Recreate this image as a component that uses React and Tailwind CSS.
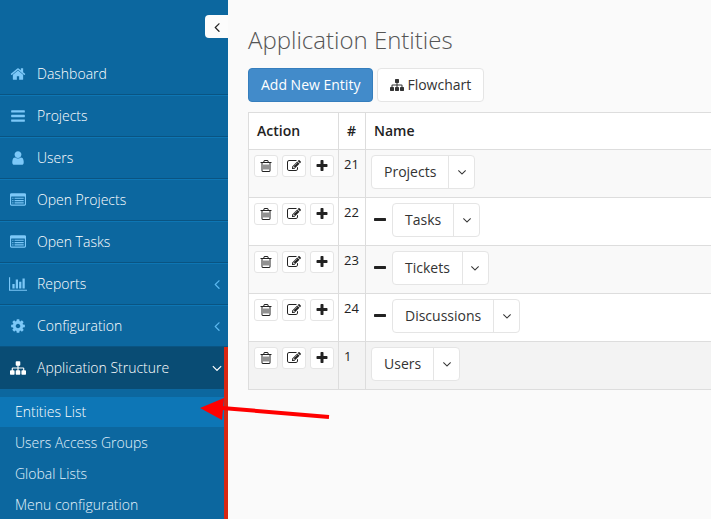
const ICONS = {
  home: "M1472 992v480q0 26-19 45t-45 19h-384v-384h-256v384h-384q-26 0-45-19t-19-45v-480q0-1 .5-3t.5-3l575-474 575 474q1 2 1 6zm223-69l-62 74q-8 9-21 11h-3q-13 0-21-7l-692-577-692 577q-12 8-24 7-13-2-21-11l-62-74q-8-10-7-23.5t11-21.5l719-599q32-26 76-26t76 26l244 204v-195q0-14 9-23t23-9h192q14 0 23 9t9 23v408l219 182q10 8 11 21.5t-7 23.5z",
  bars: "M1664 1344v128q0 26-19 45t-45 19h-1408q-26 0-45-19t-19-45v-128q0-26 19-45t45-19h1408q26 0 45 19t19 45zm0-512v128q0 26-19 45t-45 19h-1408q-26 0-45-19t-19-45v-128q0-26 19-45t45-19h1408q26 0 45 19t19 45zm0-512v128q0 26-19 45t-45 19h-1408q-26 0-45-19t-19-45v-128q0-26 19-45t45-19h1408q26 0 45 19t19 45z",
  user: "M1536 1399q0 109-62.5 187t-150.5 78h-854q-88 0-150.5-78t-62.5-187q0-85 8.5-160.5t31.5-152 58.5-131 94-89 134.5-34.5q131 128 313 128t313-128q76 0 134.5 34.5t94 89 58.5 131 31.5 152 8.5 160.5zm-256-887q0 159-112.5 271.5t-271.5 112.5-271.5-112.5-112.5-271.5 112.5-271.5 271.5-112.5 271.5 112.5 112.5 271.5z",
  list: "M256 1152h128v128h-128zM256 896h128v128h-128zM256 640h128v128h-128zM512 1152h1024v128h-1024zM512 896h1024v128h-1024zM512 640h1024v128h-1024zM1664 1376v-832q0-13-9.5-22.5t-22.5-9.5h-1472q-13 0-22.5 9.5t-9.5 22.5v832q0 13 9.5 22.5t22.5 9.5h1472q13 0 22.5-9.5t9.5-22.5zm128-1088v1088q0 66-47 113t-113 47h-1472q-66 0-113-47t-47-113v-1088q0-66 47-113t113-47h1472q66 0 113 47t47 113z",
  chart: "M640 896v512h-256v-512h256zm384-512v1024h-256v-1024h256zm1024 1152v128h-2048v-1536h128v1408h1920zm-640-896v768h-256v-768h256zm384-384v1152h-256v-1152h256z",
  cog: "M1152 896q0-106-75-181t-181-75-181 75-75 181 75 181 181 75 181-75 75-181zm512-109v222q0 12-8 23t-20 13l-185 28q-19 54-39 91 35 50 107 138 10 12 10 25t-9 23q-27 37-99 108t-94 71q-12 0-26-9l-138-108q-44 23-91 38-16 136-29 186-7 28-36 28h-222q-14 0-24.5-8.5t-11.5-21.5l-28-184q-49-16-90-37l-141 107q-10 9-25 9-14 0-25-11-126-114-165-168-7-10-7-23 0-12 8-23 15-21 51-66.5t54-70.5q-27-50-41-99l-183-27q-13-2-21-12.5t-8-23.5v-222q0-12 8-23t19-13l186-28q14-46 39-92-40-57-107-138-10-12-10-24 0-10 9-23 26-36 98.5-107.5t94.5-71.5q13 0 26 10l138 107q44-23 91-38 16-136 29-186 7-28 36-28h222q14 0 24.5 8.5t11.5 21.5l28 184q49 16 90 37l142-107q9-9 24-9 13 0 25 10 129 119 165 170 7 8 7 22 0 12-8 23-15 21-51 66.5t-54 70.5q26 50 41 98l183 28q13 2 21 12.5t8 23.5z",
  sitemap: "M1792 1248v320q0 40-28 68t-68 28h-320q-40 0-68-28t-28-68v-320q0-40 28-68t68-28h96v-192h-512v192h96q40 0 68 28t28 68v320q0 40-28 68t-68 28h-320q-40 0-68-28t-28-68v-320q0-40 28-68t68-28h96v-192h-512v192h96q40 0 68 28t28 68v320q0 40-28 68t-68 28h-320q-40 0-68-28t-28-68v-320q0-40 28-68t68-28h96v-192q0-52 38-90t90-38h512v-192h-96q-40 0-68-28t-28-68v-320q0-40 28-68t68-28h320q40 0 68 28t28 68v320q0 40-28 68t-68 28h-96v192h512q52 0 90 38t38 90v192h96q40 0 68 28t28 68z",
  trash: "M704 736v576q0 14-9 23t-23 9h-64q-14 0-23-9t-9-23v-576q0-14 9-23t23-9h64q14 0 23 9t9 23zm256 0v576q0 14-9 23t-23 9h-64q-14 0-23-9t-9-23v-576q0-14 9-23t23-9h64q14 0 23 9t9 23zm256 0v576q0 14-9 23t-23 9h-64q-14 0-23-9t-9-23v-576q0-14 9-23t23-9h64q14 0 23 9t9 23zm128 724v-948h-896v948q0 22 7 40.5t14.5 27 10.5 8.5h832q3 0 10.5-8.5t14.5-27 7-40.5zm-672-1076h448l-48-117q-7-9-17-11h-317q-10 2-17 11zm928 32v64q0 14-9 23t-23 9h-96v948q0 83-47 143.5t-113 60.5h-832q-66 0-113-58.5t-47-141.5v-952h-96q-14 0-23-9t-9-23v-64q0-14 9-23t23-9h309l70-167q15-37 54-63t79-26h320q40 0 79 26t54 63l70 167h309q14 0 23 9t9 23z",
  edit: "M888 1184l116-116-152-152-116 116v56h96v96h56zm440-720q-16-16-33 1l-350 350q-17 17-1 33t33-1l350-350q17-17 1-33zm80 594v190q0 119-84.5 203.5t-203.5 84.5h-832q-119 0-203.5-84.5t-84.5-203.5v-832q0-119 84.5-203.5t203.5-84.5h832q63 0 117 25 15 7 18 23 3 17-9 29l-49 49q-14 14-32 8-23-6-45-6h-832q-66 0-113 47t-47 113v832q0 66 47 113t113 47h832q66 0 113-47t47-113v-126q0-13 9-22l64-64q15-15 35-7t20 29zm-96-738l288 288-672 672h-288v-288zm444 132l-92 92-288-288 92-92q28-28 68-28t68 28l152 152q28 28 28 68t-28 68z",
  plus: "M1600 736v192q0 40-28 68t-68 28h-416v416q0 40-28 68t-68 28h-192q-40 0-68-28t-28-68v-416h-416q-40 0-68-28t-28-68v-192q0-40 28-68t68-28h416v-416q0-40 28-68t68-28h192q40 0 68 28t28 68v416h416q40 0 68 28t28 68z",
  minus: "M1664 736v192q0 40-28 68t-68 28h-1344q-40 0-68-28t-28-68v-192q0-40 28-68t68-28h1344q40 0 68 28t28 68z",
  angleLeft: "M1203 544q0 13-10 23l-393 393 393 393q10 10 10 23t-10 23l-50 50q-10 10-23 10t-23-10l-466-466q-10-10-10-23t10-23l466-466q10-10 23-10t23 10l50 50q10 10 10 23z",
  angleDown: "M1395 736q0 13-10 23l-466 466q-10 10-23 10t-23-10l-466-466q-10-10-10-23t10-23l50-50q10-10 23-10t23 10l393 393 393-393q10-10 23-10t23 10l50 50q10 10 10 23z",
};

const menu = [
  { label: "Dashboard", icon: "home" },
  { label: "Projects", icon: "bars" },
  { label: "Users", icon: "user" },
  { label: "Open Projects", icon: "list" },
  { label: "Open Tasks", icon: "list" },
  { label: "Reports", icon: "chart", arrow: "angleLeft" },
  { label: "Configuration", icon: "cog", arrow: "angleLeft" },
];

const submenu = ["Entities List", "Users Access Groups", "Global Lists", "Menu configuration"];

const entities = [
  { id: 21, name: "Projects", row: "bg-[#f9f9f9]" },
  { id: 22, name: "Tasks", nested: true, row: "bg-white" },
  { id: 23, name: "Tickets", nested: true, row: "bg-[#f9f9f9]" },
  { id: 24, name: "Discussions", nested: true, row: "bg-white" },
  { id: 1, name: "Users", row: "bg-[#f3f3f3]" },
];

function Icon({ name, className = "size-[14px]" }) {
  return (
    <svg
      className={`shrink-0 ${className}`}
      viewBox={name === "chart" ? "0 0 2048 1792" : "0 0 1792 1792"}
      fill="currentColor"
      aria-hidden="true"
    >
      <path d={ICONS[name]} />
    </svg>
  );
}

function Sidebar() {
  return (
    <aside className="relative flex w-[228px] shrink-0 flex-col bg-[#0c679f] text-white">
      <div className="flex h-[53px] shrink-0 items-center justify-end">
        <button
          type="button"
          aria-label="Collapse menu"
          className="flex h-[23px] w-[23px] items-center justify-center rounded-l bg-[#fcfcfc] text-[#222]"
        >
          <Icon name="angleLeft" className="size-4" />
        </button>
      </div>

      <nav className="text-sm font-light">
        {menu.map((item) => (
          <a
            key={item.label}
            href="#"
            className="flex h-[42px] items-center gap-[9px] border-t border-b border-t-[#0e76b4] border-b-[#0a5482] pr-[3px] pl-2 first:border-t-transparent"
          >
            <span className="flex w-5 justify-center text-[#7cc8f8]">
              <Icon name={item.icon} className={item.icon === "chart" ? "h-4 w-[18px]" : "size-4"} />
            </span>
            <span className="flex-1">{item.label}</span>
            {item.arrow && <Icon name={item.arrow} className="size-4 text-[#5cb8f0]" />}
          </a>
        ))}
        <a href="#" aria-expanded="true" className="flex h-[42px] items-center gap-[9px] bg-[#094c74] pr-[3px] pl-2">
          <span className="flex w-5 justify-center">
            <Icon name="sitemap" className="size-4" />
          </span>
          <span className="flex-1">Application Structure</span>
          <Icon name="angleDown" className="size-4" />
        </a>
        <ul className="flex flex-col gap-px py-2">
          {submenu.map((label, i) => (
            <li key={label}>
              <a
                href="#"
                className={`flex h-[30px] items-center pl-[15px] ${i === 0 ? "bg-[#0d76b6] text-white" : "text-[#e4f3fc]"}`}
              >
                {label}
              </a>
            </li>
          ))}
        </ul>
      </nav>
      <span className="absolute top-[347px] right-0 bottom-0 w-1 bg-[#d92612]" />
      <svg className="absolute top-[396px] left-[200px] z-10 h-7 w-[132px]" viewBox="0 0 132 28" aria-hidden="true">
        <path d="M22 12L129 21" stroke="#ff0000" strokeWidth="4" />
        <path d="M0 12L24 2L22 24Z" fill="#ff0000" />
      </svg>
    </aside>
  );
}

function ActionButton({ icon, label }) {
  return (
    <button
      type="button"
      aria-label={label}
      className="flex h-[22px] items-center justify-center rounded-[3px] border border-[#e5e5e5] bg-white px-1 text-[#222]"
    >
      <Icon name={icon} />
    </button>
  );
}

function EntityButton({ name }) {
  return (
    <div className="flex h-[34px] rounded border border-[#e5e5e5] bg-white text-[#333]">
      <button type="button" className="px-3">
        {name}
      </button>
      <button
        type="button"
        aria-label={`${name} options`}
        className="flex w-[26px] items-center justify-center border-l border-[#e5e5e5]"
      >
        <Icon name="angleDown" />
      </button>
    </div>
  );
}

export default function App() {
  return (
    <div className="flex h-screen overflow-hidden bg-[#fafafa] font-['Open_Sans',sans-serif] text-sm text-[#222]">
      <Sidebar />
      <main className="min-w-0 flex-1 pt-5 pl-5">
        <h1 className="text-2xl leading-10 font-light text-[#555]">Application Entities</h1>
        <div className="mt-2 flex gap-1">
          <button
            type="button"
            className="h-[34px] rounded border border-[#357ebd] bg-[#428bca] px-3 text-white"
          >
            Add New Entity
          </button>
          <button
            type="button"
            className="flex h-[34px] items-center gap-[3px] rounded border border-[#e5e5e5] bg-white px-3 text-[#333]"
          >
            <Icon name="sitemap" />
            Flowchart
          </button>
        </div>

        <table className="mt-[10px] w-full border-collapse text-left">
          <thead>
            <tr className="h-[37px] bg-white">
              <th className="w-[90px] border border-[#ddd] px-2 font-semibold">Action</th>
              <th className="w-[27px] border border-[#ddd] px-2 font-semibold">#</th>
              <th className="border border-r-0 border-[#ddd] px-2 font-semibold">Name</th>
            </tr>
          </thead>
          <tbody>
            {entities.map((entity) => (
              <tr key={entity.id} className={entity.row}>
                <td className="border border-[#ddd] pt-[5px] pr-1 pl-[5px] align-top">
                  <div className="flex gap-1">
                    <ActionButton icon="trash" label="Delete" />
                    <ActionButton icon="edit" label="Edit" />
                    <ActionButton icon="plus" label="Add" />
                  </div>
                </td>
                <td className="border border-[#ddd] px-[5px] pt-[5px] align-top text-[13px] leading-[18px]">{entity.id}</td>
                <td className="border border-r-0 border-[#ddd] px-[5px] pt-[5px] pb-2">
                  <div className="flex items-center gap-[5px]">
                    {entity.nested && <Icon name="minus" className="ml-[2px] size-[14px]" />}
                    <EntityButton name={entity.name} />
                  </div>
                </td>
              </tr>
            ))}
          </tbody>
        </table>
      </main>
    </div>
  );
}
